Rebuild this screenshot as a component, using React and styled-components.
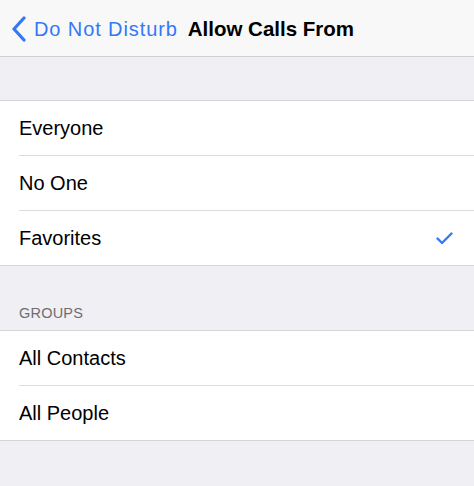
import React from "react";
import styled, { createGlobalStyle } from "styled-components";

const Global = createGlobalStyle`
  html, body { margin: 0; padding: 0; background: #efeff4; }
  body { font-family: "Liberation Sans", Arial, sans-serif; -webkit-font-smoothing: antialiased; }
`;

const Screen = styled.div`
  width: 474px;
  min-height: 486px;
  background: #efeff4;
`;

const NavBar = styled.header`
  height: 57px;
  display: flex;
  align-items: center;
  padding: 2px 0 0 11px;
  box-sizing: border-box;
  background: #f8f8f8;
  border-bottom: 1px solid #cfced3;
`;

const BackButton = styled.button`
  display: flex;
  align-items: center;
  gap: 7px;
  border: 0;
  padding: 0;
  background: none;
  color: #3478f6;
  font: 400 20px/1 "Liberation Sans", Arial, sans-serif;
  letter-spacing: 0.9px;
  cursor: pointer;
`;

const Title = styled.h1`
  margin: 0 0 0 10px;
  font: 700 20.5px/1 "Liberation Sans", Arial, sans-serif;
  color: #000;
`;

const Gap = styled.div`
  height: ${(p) => p.$h}px;
  display: flex;
  align-items: flex-end;
  padding: 0 19px 9px;
  box-sizing: border-box;
`;

const SectionLabel = styled.span`
  font-size: 14.5px;
  color: #6d6d72;
  letter-spacing: 0.2px;
`;

const Group = styled.ul`
  list-style: none;
  margin: 0;
  padding: 0 0 0 19px;
  background: #fff;
  border-top: 1px solid #d4d3d8;
  border-bottom: 1px solid #d4d3d8;
`;

const Row = styled.li`
  height: 54px;
  display: flex;
  align-items: center;
  justify-content: space-between;
  padding-right: 21px;
  font-size: 20px;
  color: #000;
  & + & {
    border-top: 1px solid #dcdbe0;
  }
`;

const Chevron = () => (
  <svg width="16" height="26" viewBox="0 0 16 26" fill="none">
    <path d="M13 2 L3 13 L13 24" stroke="#3478f6" strokeWidth="3.2" strokeLinecap="round" strokeLinejoin="round" />
  </svg>
);

const Check = () => (
  <svg width="17" height="13" viewBox="0 0 17 13" fill="none">
    <path d="M1.5 6.5 L6 11 L15.5 1.5" stroke="#3478f6" strokeWidth="2.4" strokeLinecap="round" strokeLinejoin="round" />
  </svg>
);

const callers = [
  { label: "Everyone" },
  { label: "No One" },
  { label: "Favorites", selected: true },
];

const groups = [{ label: "All Contacts" }, { label: "All People" }];

export default function App() {
  return (
    <Screen>
      <Global />
      <NavBar>
        <BackButton>
          <Chevron />
          Do Not Disturb
        </BackButton>
        <Title>Allow Calls From</Title>
      </NavBar>
      <Gap $h={43} />
      <Group>
        {callers.map((c) => (
          <Row key={c.label}>
            {c.label}
            {c.selected && <Check />}
          </Row>
        ))}
      </Group>
      <Gap $h={64}>
        <SectionLabel>GROUPS</SectionLabel>
      </Gap>
      <Group>
        {groups.map((g) => (
          <Row key={g.label}>{g.label}</Row>
        ))}
      </Group>
    </Screen>
  );
}
